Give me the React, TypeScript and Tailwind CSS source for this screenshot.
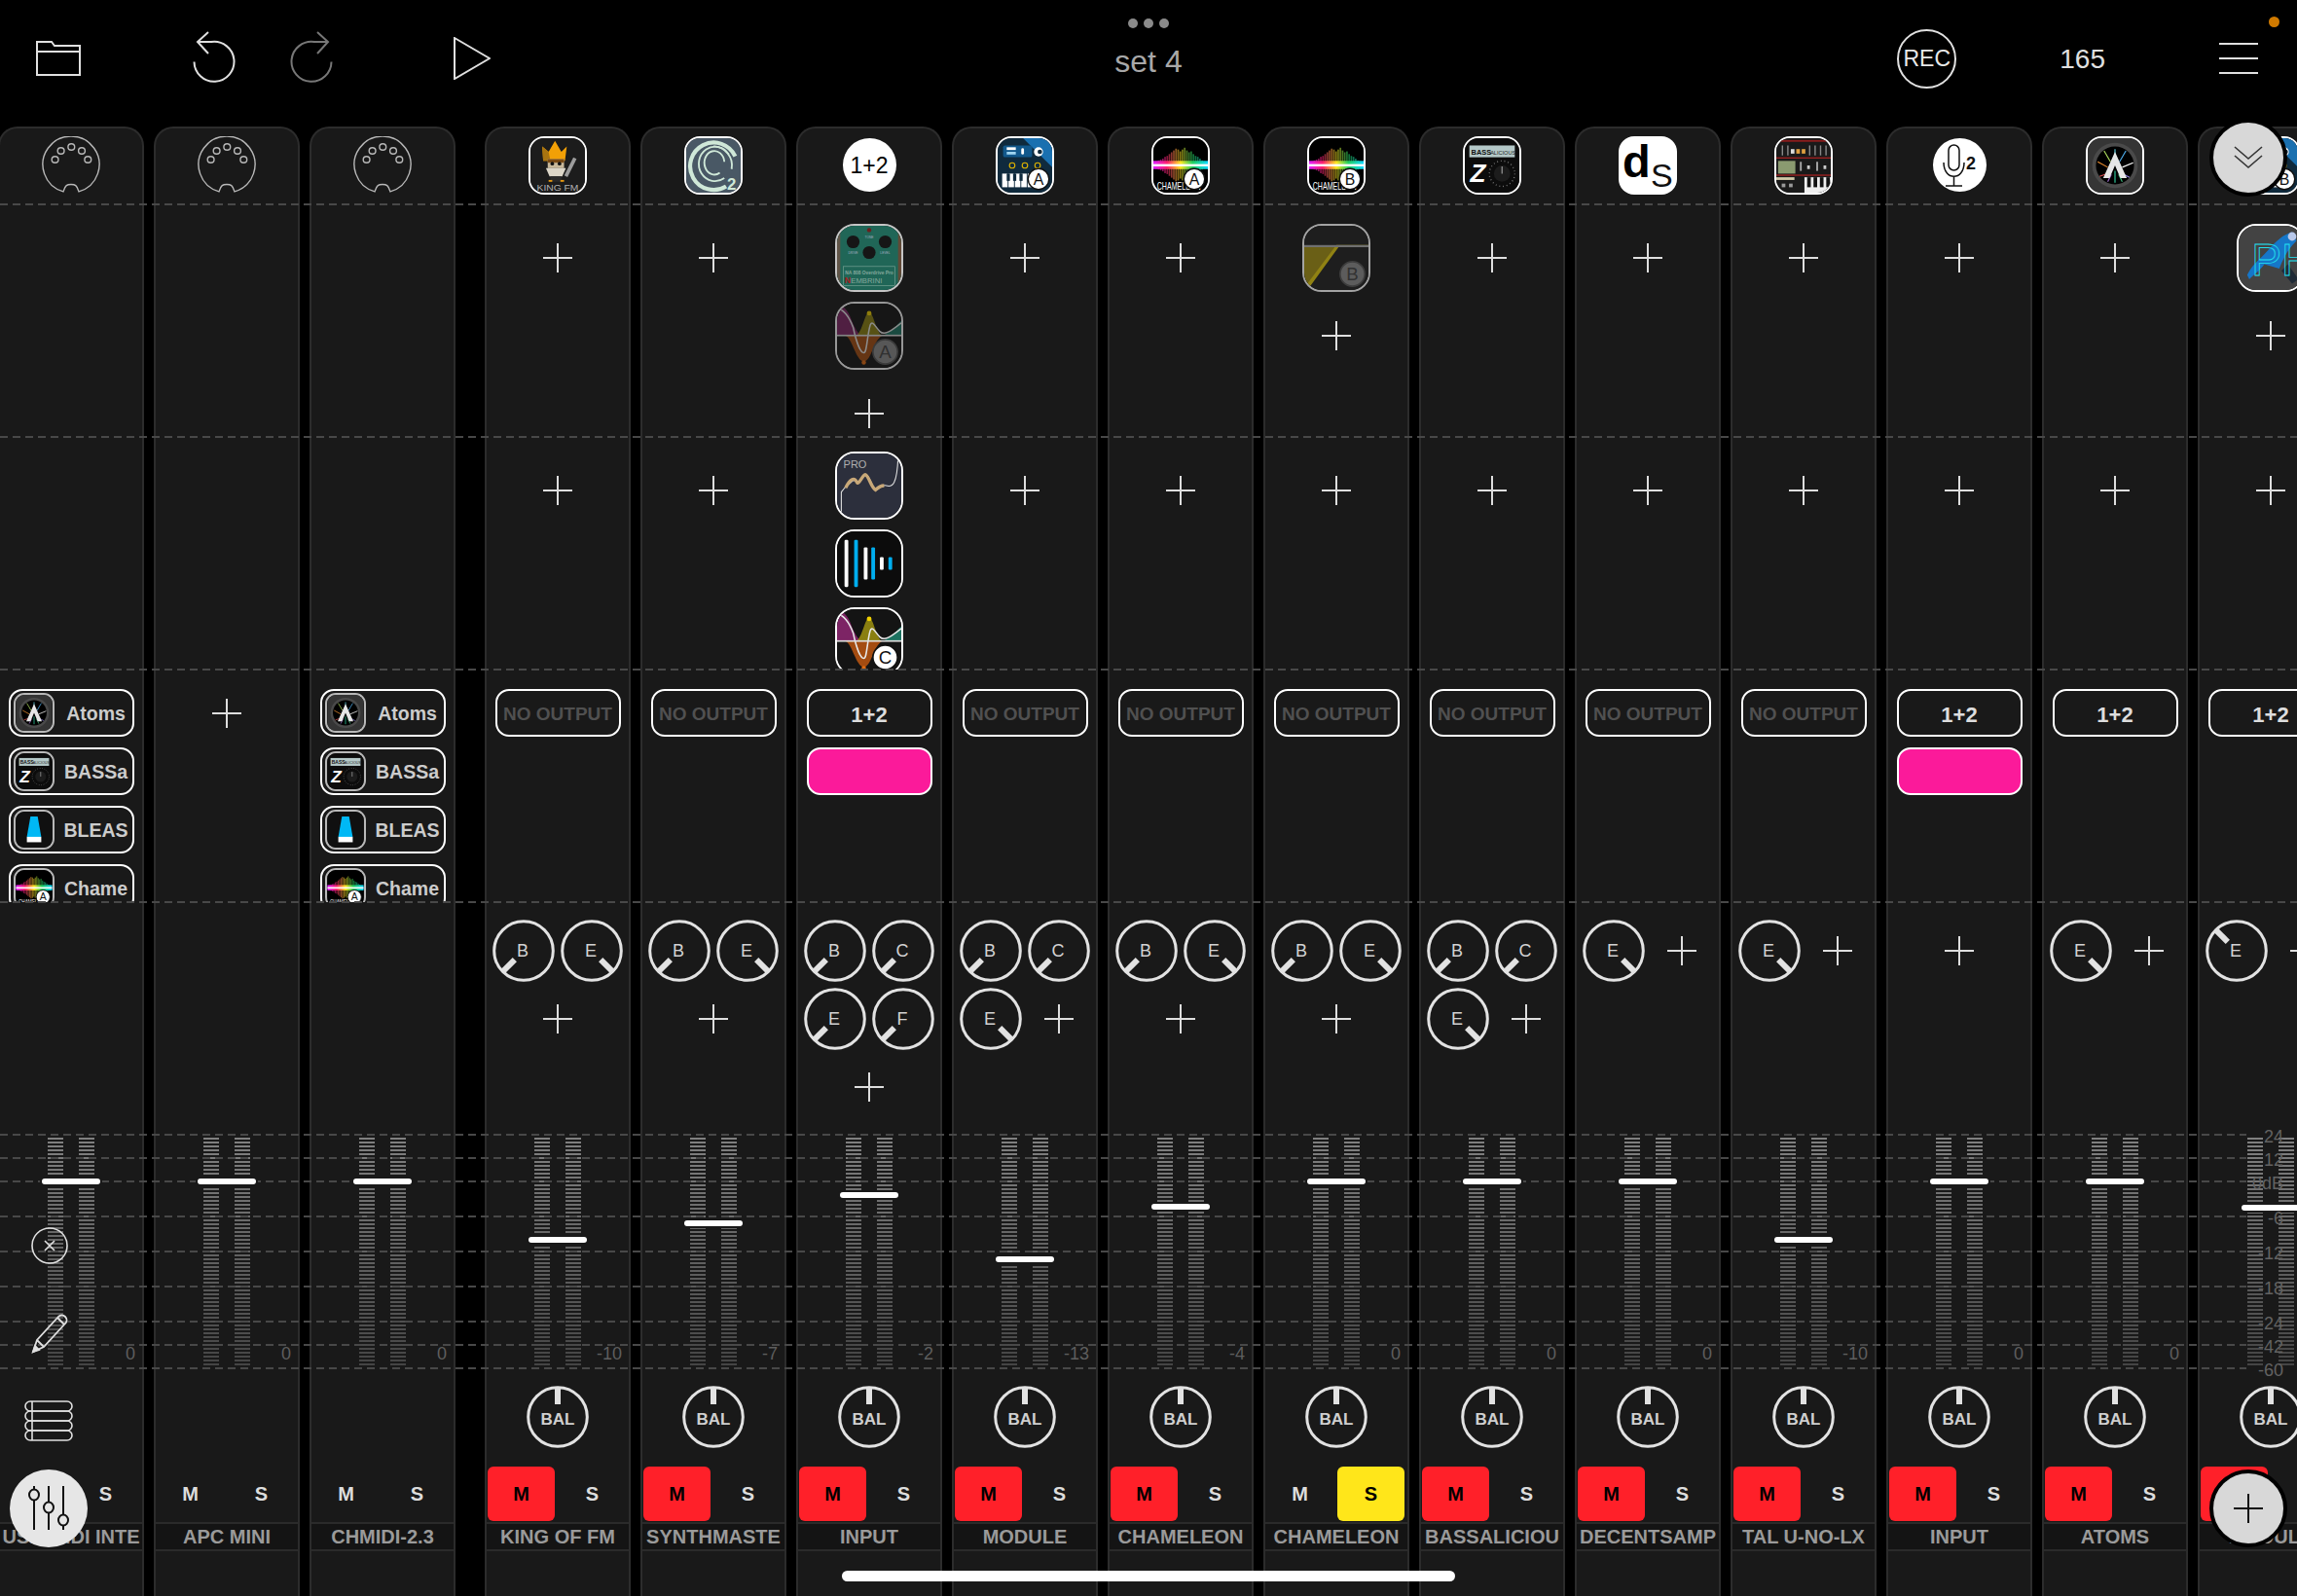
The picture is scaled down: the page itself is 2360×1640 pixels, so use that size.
import type { ReactNode } from "react";

type Knob = [string, number];
type Insert = { art: string; dim?: string };
type Channel = {
  name: string;
  head: string;
  inserts: Insert[];
  sends: Insert[];
  output?: string;
  pink?: boolean;
  routes?: [string, string][];
  knobs: Knob[];
  fader: number;
  value?: string;
  muted?: boolean;
  soloed?: boolean;
  midi?: boolean;
  scale?: boolean;
};

const BL = -135;
const BR = 135;

const channels: Channel[] = [
  {
    name: "USB MIDI INTE", head: "midi", inserts: [], sends: [], midi: true, knobs: [], fader: 1214, value: "0",
    routes: [["atoms", "Atoms"], ["bassa", "BASSa"], ["bleass", "BLEAS"], ["chamA", "Chame"]],
  },
  { name: "APC MINI", head: "midi", inserts: [], sends: [], midi: true, knobs: [], fader: 1214, value: "0", routes: [] },
  {
    name: "CHMIDI-2.3", head: "midi", inserts: [], sends: [], midi: true, knobs: [], fader: 1214, value: "0",
    routes: [["atoms", "Atoms"], ["bassa", "BASSa"], ["bleass", "BLEAS"], ["chamA", "Chame"]],
  },
  { name: "KING OF FM", head: "king", inserts: [], sends: [], knobs: [["B", BL], ["E", BR]], fader: 1274, value: "-10", muted: true },
  { name: "SYNTHMASTE", head: "synth", inserts: [], sends: [], knobs: [["B", BL], ["E", BR]], fader: 1257, value: "-7", muted: true },
  {
    name: "INPUT", head: "in12",
    inserts: [{ art: "pedal", dim: "opacity-75" }, { art: "eqA", dim: "opacity-55" }],
    sends: [{ art: "pro" }, { art: "bars" }, { art: "eqC" }],
    output: "1+2", pink: true,
    knobs: [["B", BL], ["C", BL], ["E", BL], ["F", BL]], fader: 1228, value: "-2", muted: true,
  },
  { name: "MODULE", head: "moduleA", inserts: [], sends: [], knobs: [["B", BL], ["C", BL], ["E", BR]], fader: 1294, value: "-13", muted: true },
  { name: "CHAMELEON", head: "chamA", inserts: [], sends: [], knobs: [["B", BL], ["E", BR]], fader: 1240, value: "-4", muted: true },
  { name: "CHAMELEON", head: "chamB", inserts: [{ art: "comp", dim: "opacity-60" }], sends: [], knobs: [["B", BL], ["E", BR]], fader: 1214, value: "0", soloed: true },
  { name: "BASSALICIOU", head: "bassa", inserts: [], sends: [], knobs: [["B", BL], ["C", BL], ["E", BR]], fader: 1214, value: "0", muted: true },
  { name: "DECENTSAMP", head: "ds", inserts: [], sends: [], knobs: [["E", BR]], fader: 1214, value: "0", muted: true },
  { name: "TAL U-NO-LX", head: "tal", inserts: [], sends: [], knobs: [["E", BR]], fader: 1274, value: "-10", muted: true },
  { name: "INPUT", head: "mic2", inserts: [], sends: [], output: "1+2", pink: true, knobs: [], fader: 1214, value: "0", muted: true },
  { name: "ATOMS", head: "atoms", inserts: [], sends: [], output: "1+2", knobs: [["E", BR]], fader: 1214, value: "0", muted: true },
  { name: "MODULE", head: "moduleB", inserts: [{ art: "ph" }], sends: [], output: "1+2", knobs: [["E", -45]], fader: 1241, muted: true, scale: true },
];

const gridLines = [210, 449, 688, 927];
const faderLines = [1166, 1190, 1214, 1250, 1286, 1322, 1358, 1382, 1406];
const scaleLabels: [string, number][] = [
  ["24", 1168], ["12", 1192], ["0dB", 1216], ["-6", 1252], ["-12", 1288], ["-18", 1324], ["-24", 1360], ["-42", 1384], ["-60", 1408],
];

function Badge({ letter, dim }: { letter: string; dim?: boolean }) {
  return (
    <g>
      <circle cx="45" cy="45" r="11.5" fill={dim ? "#8a8a8a" : "#fff"} stroke={dim ? "#555" : "#111"} strokeWidth="1.5" />
      <text x="45" y="51" textAnchor="middle" fontSize="17" fill={dim ? "#444" : "#111"}>{letter}</text>
    </g>
  );
}

function Chameleon({ letter }: { letter: string }) {
  const heights = [3, 4, 5, 6, 7, 9, 10, 12, 14, 16, 18, 17, 15, 17, 19, 16, 14, 15, 12, 10, 9, 7, 5, 4, 3];
  return (
    <>
      <defs>
        <linearGradient id="chroma" gradientUnits="userSpaceOnUse" x1="0" x2="60" y1="0" y2="0">
          <stop offset="0" stopColor="#e020ff" />
          <stop offset="0.25" stopColor="#ff2070" />
          <stop offset="0.5" stopColor="#ffe820" />
          <stop offset="0.72" stopColor="#20d060" />
          <stop offset="1" stopColor="#10d8ff" />
        </linearGradient>
      </defs>
      <rect width="60" height="60" fill="#000" />
      <g fill="url(#chroma)">
        <rect x="0" y="25" width="60" height="9" />
        {heights.map((h, i) => (
          <rect key={i} x={i * 2.4} y={29.5 - h} width="1.8" height={h * 2} opacity="0.55" />
        ))}
      </g>
      <rect x="0" y="28.5" width="60" height="2.5" fill="#fff" />
      <text x="4" y="57" fontSize="12" fill="#fff" textLength="48" lengthAdjust="spacingAndGlyphs">CHAMELEON</text>
      <Badge letter={letter} />
    </>
  );
}

function ModuleArt({ letter }: { letter: string }) {
  return (
    <>
      <rect width="60" height="60" fill="#0f2a3d" />
      <polygon points="28,0 60,0 60,32" fill="#1a70b0" />
      <rect x="6" y="8" width="32" height="13" rx="2" fill="#11588c" />
      <rect x="10" y="10" width="10" height="3" fill="#fff" />
      <rect x="10" y="15" width="10" height="3" fill="#9fd4f0" />
      <rect x="26" y="11" width="3" height="7" rx="1.5" fill="#fff" />
      <circle cx="45" cy="15" r="5" fill="#fff" />
      <circle cx="46.5" cy="15" r="2.5" fill="#0f2a3d" />
      {[16, 30, 44].map((x) => (
        <circle key={x} cx={x} cy="30" r="3" fill="none" stroke="#e0b400" strokeWidth="1.2" />
      ))}
      {[5, 12, 19, 26, 33].map((x) => (
        <rect key={x} x={x} y="39" width="6" height="15" fill="#fff" />
      ))}
      {[10, 17, 24].map((x) => (
        <rect key={x} x={x} y="39" width="3.5" height="8" fill="#0f2a3d" />
      ))}
      <Badge letter={letter} />
    </>
  );
}

function EqArt({ letter, dim }: { letter: string; dim?: boolean }) {
  return (
    <>
      <rect width="60" height="60" fill="#141414" />
      <path d="M0 0 C6 2 10 6 13 14 C16 22 19 28 24 30 L0 30Z" fill="#a02a80" opacity="0.75" />
      <path d="M18 30 C24 26 26 8 30 8 C34 8 36 26 42 30Z" fill="#a89a10" opacity="0.8" />
      <path d="M42 30 C48 28 54 22 60 16 L60 30Z" fill="#1f9a80" opacity="0.7" />
      <path d="M8 30 C14 32 18 54 25 54 C32 54 34 34 42 30Z" fill="#c85a10" opacity="0.8" />
      <path d="M0 4 C8 6 12 14 15 22 C18 36 22 46 25 46 C28 46 28 30 31 20 C33 15 36 22 40 26 C44 30 50 26 60 18" fill="none" stroke="#e8e8e8" strokeWidth="1.4" />
      <rect x="0" y="29" width="60" height="1.5" fill="#ddd" />
      <circle cx="30" cy="9" r="2.2" fill="#f0d000" />
      <circle cx="25" cy="55" r="2" fill="#e06a10" />
      <Badge letter={letter} dim={dim} />
    </>
  );
}

function Art({ name }: { name: string }) {
  switch (name) {
    case "king":
      return (
        <>
          <rect width="60" height="60" fill="#1c1c1c" />
          <polygon points="14,25 13,9 20,15 27,3 34,15 40,9 38,25" fill="#f2a006" />
          <polygon points="14,25 13,9 20,15 22,25" fill="#a87410" />
          <rect x="19" y="23" width="18" height="10" fill="#c8b89a" />
          <rect x="19" y="23" width="18" height="4" fill="#7a4a14" />
          <circle cx="24" cy="28" r="2" fill="#111" />
          <circle cx="32" cy="28" r="2" fill="#111" />
          <path d="M17 33 H39 L35 42 H21Z" fill="#dcd6c8" />
          <rect x="22" y="42" width="12" height="6" fill="#2a2a2a" />
          <rect x="20" y="46" width="4" height="2" fill="#e89a10" />
          <rect x="33" y="46" width="4" height="2" fill="#e89a10" />
          <path d="M49 22 L39 42" stroke="#9c9c9c" strokeWidth="4" />
          <text x="30" y="58" textAnchor="middle" fontSize="10.5" fill="#b0b0b0" textLength="46" lengthAdjust="spacingAndGlyphs">KING FM</text>
        </>
      );
    case "synth":
      return (
        <>
          <rect width="60" height="60" fill="#495865" />
          <g fill="none" stroke="#cfe8d8">
            <path d="M44 53 A26 26 0 1 1 54 20" strokeWidth="4.5" />
            <path d="M42 44 A18 19 0 1 1 47 18" strokeWidth="2" />
            <path d="M37 38 A11 13 0 1 1 42 26" strokeWidth="2" />
            <path d="M30 9 A21 21 0 0 1 50 34" strokeWidth="2" />
          </g>
          <text x="50" y="57" textAnchor="middle" fontSize="18" fontWeight="700" fill="#cfe8d8">2</text>
        </>
      );
    case "moduleA":
      return <ModuleArt letter="A" />;
    case "moduleB":
      return <ModuleArt letter="B" />;
    case "chamA":
      return <Chameleon letter="A" />;
    case "chamB":
      return <Chameleon letter="B" />;
    case "bassa":
      return (
        <>
          <rect width="60" height="60" fill="#0c0c0c" />
          <rect x="5" y="8" width="50" height="13" fill="#b4c8c8" />
          <text x="7" y="18" fontSize="8" fontWeight="700" fill="#111">BASS</text>
          <text x="28" y="18" fontSize="6" fill="#222">ALICIOUS</text>
          <text x="6" y="48" fontSize="28" fontWeight="700" fontStyle="italic" fill="#fff">Z</text>
          <circle cx="41" cy="39" r="9" fill="#1c1c1c" />
          <circle cx="41" cy="39" r="14" fill="none" stroke="#777" strokeWidth="1.5" strokeDasharray="1 3" />
          <path d="M41 39 V31" stroke="#888" strokeWidth="1.5" />
        </>
      );
    case "ds":
      return (
        <>
          <rect width="60" height="60" fill="#fff" />
          <text x="4" y="42" fontSize="47" fontWeight="700" fill="#000">d</text>
          <text x="33" y="52" fontSize="34" fill="#111">S</text>
        </>
      );
    case "tal":
      return (
        <>
          <rect width="60" height="60" fill="#1a1a1a" />
          <rect x="0" y="2" width="60" height="2" fill="#8a1c1c" />
          <rect x="16" y="12" width="4" height="5" fill="#ddd" />
          <rect x="22" y="12" width="4" height="5" fill="#e0a040" />
          <rect x="28" y="12" width="4" height="5" fill="#e0a040" />
          {[6, 12, 36, 42, 48, 54].map((x) => (
            <rect key={x} x={x} y="8" width="1.5" height="11" fill="#888" />
          ))}
          <rect x="0" y="21" width="60" height="1.5" fill="#9a2020" />
          <rect x="2" y="25" width="19" height="14" fill="#8a9a70" />
          <rect x="26" y="26" width="2" height="10" fill="#aaa" />
          <rect x="34" y="30" width="3" height="4" fill="#ccc" />
          <rect x="44" y="26" width="2" height="10" fill="#aaa" />
          <rect x="52" y="30" width="3" height="4" fill="#ccc" />
          <rect x="0" y="40" width="60" height="1.5" fill="#9a2020" />
          <rect x="0" y="43" width="20" height="3" fill="#cfc8a8" />
          {[6, 14].map((x) => (
            <rect key={x} x={x} y="50" width="4" height="4" fill="#999" />
          ))}
          <rect x="31" y="43" width="29" height="17" fill="#eee" />
          {[34, 41, 48, 55].map((x) => (
            <rect key={x} x={x} y="43" width="4" height="11" fill="#111" />
          ))}
        </>
      );
    case "mic2":
      return (
        <g fill="none" stroke="#111">
          <rect x="16" y="7" width="11" height="26" rx="5.5" strokeWidth="1.5" />
          <path d="M11 25 C11 44 32 44 32 25 M21.5 39 V49 M13 49 H30" strokeWidth="1.5" />
          <text x="39" y="32" textAnchor="middle" fontSize="18" fontWeight="700" fill="#111" stroke="none">2</text>
        </g>
      );
    case "atoms":
      return (
        <>
          <rect width="60" height="60" fill="#353535" />
          <circle cx="30" cy="30" r="25" fill="#4a4a4a" />
          <circle cx="30" cy="30" r="21" fill="#000" />
          <g strokeWidth="1.2">
            <path d="M30 24 V12" stroke="#60d0e0" />
            <path d="M25 26 L18 14" stroke="#b0e060" />
            <path d="M35 26 L42 14" stroke="#50b0f0" />
            <path d="M22 32 L11 26" stroke="#f09030" />
            <path d="M38 32 L50 27" stroke="#fff" />
            <path d="M24 38 L13 42" stroke="#e05050" />
            <path d="M36 38 L46 43" stroke="#9080e0" />
            <path d="M26 40 L22 48" stroke="#a070d0" />
            <path d="M34 40 L38 48" stroke="#40c080" />
            <path d="M30 36 V49" stroke="#30d0a0" />
          </g>
          <polygon points="30,15 43,44 36,44 30,30 24,44 17,44" fill="#e6e6e6" />
        </>
      );
    case "bleass":
      return (
        <>
          <rect width="60" height="60" fill="#101010" />
          <polygon points="24,8 36,8 42,42 18,42" fill="#00b8f5" />
          <rect x="18" y="42" width="24" height="9" fill="#fff" />
        </>
      );
    case "pedal":
      return (
        <>
          <rect width="60" height="60" fill="#23806c" />
          <rect x="0" y="0" width="3" height="60" fill="#7a6a58" />
          <rect x="57" y="0" width="3" height="60" fill="#7a5a40" />
          <circle cx="30" cy="4" r="2" fill="#8a2020" />
          {[[15, 15], [45, 15], [30, 25]].map(([x, y]) => (
            <circle key={x} cx={x} cy={y} r="6" fill="#151515" />
          ))}
          <text x="30" y="12" textAnchor="middle" fontSize="3" fill="#cde">TONE</text>
          <text x="15" y="26" textAnchor="middle" fontSize="3" fill="#cde">DRIVE</text>
          <text x="45" y="26" textAnchor="middle" fontSize="3" fill="#cde">LEVEL</text>
          <rect x="6" y="38" width="48" height="18" fill="none" stroke="#9ad0c0" strokeWidth="0.6" />
          <text x="30" y="45" textAnchor="middle" fontSize="4.4" fontWeight="700" fill="#a8d8c8">NA 808 Overdrive Pro</text>
          <text x="7" y="54" fontSize="8" fontWeight="700" fill="#d02020">N</text>
          <text x="13" y="54" fontSize="7" fill="#a8d8c8">EMBRINI</text>
        </>
      );
    case "eqA":
      return <EqArt letter="A" dim />;
    case "eqC":
      return <EqArt letter="C" />;
    case "comp":
      return (
        <>
          <rect width="60" height="60" fill="#222" />
          <path d="M0 20 H30 L0 60Z" fill="#a08f15" />
          <path d="M0 58 L30 18 H60 V20 H32 L3 60 H0Z" fill="#e0c810" />
          <rect x="0" y="18" width="60" height="2" fill="#aaa" />
          <Badge letter="B" dim />
        </>
      );
    case "pro":
      return (
        <>
          <rect width="60" height="60" fill="#2c2f3c" />
          <text x="6" y="14" fontSize="10" fill="#b0b0b0">PRO</text>
          <path d="M4 60 V36 C8 30 10 30 14 26 C17 22 20 32 24 22 C27 16 30 22 34 32 C38 38 40 28 46 30 C52 32 56 28 57 4" fill="none" stroke="#ddd" strokeWidth="1" />
          <path d="M8 32 C12 24 16 22 18 26 C20 32 24 18 27 20 C30 22 32 32 36 34 C38 32 40 30 44 30" fill="none" stroke="#c8a878" strokeWidth="3" />
        </>
      );
    case "bars":
      return (
        <>
          <rect width="60" height="60" fill="#0c0c0c" />
          <rect x="7" y="8" width="3.5" height="44" rx="1" fill="#fff" />
          <rect x="16" y="8" width="3.5" height="44" rx="1" fill="#00aeef" />
          <rect x="25" y="15" width="3.5" height="30" rx="1" fill="#fff" />
          <rect x="32" y="15" width="3.5" height="30" rx="1" fill="#00aeef" />
          <rect x="40" y="24" width="3.5" height="12" rx="1" fill="#fff" />
          <rect x="48" y="24" width="3.5" height="12" rx="1" fill="#00aeef" />
        </>
      );
    case "ph":
      return (
        <>
          <rect width="60" height="60" fill="#434343" />
          <path d="M8 46 C14 34 22 30 30 20 C36 14 42 8 50 6 L54 14 C46 22 42 30 38 40 L24 36 C20 42 14 46 10 50Z" fill="#1676c8" />
          <path d="M46 36 L56 50 L50 54 L40 42Z" fill="#1f2a36" />
          <circle cx="50" cy="10" r="4" fill="#b8c8ea" />
          <text x="12" y="46" fontSize="42" fill="none" stroke="#22e0f0" strokeWidth="0.8">PH</text>
        </>
      );
    default:
      return null;
  }
}

function PluginIcon({ art, className }: { art: string; className: string }) {
  return (
    <div className={`box-border shrink-0 overflow-hidden ${className}`}>
      <svg viewBox="0 0 60 60" className="block h-full w-full">
        <Art name={art} />
      </svg>
    </div>
  );
}

function Plus({ color = "#dedede" }: { color?: string }) {
  return (
    <svg width="30" height="30" viewBox="0 0 30 30">
      <path d="M0 15 H30 M15 0 V30" stroke={color} strokeWidth="2" />
    </svg>
  );
}

function MidiIcon() {
  return (
    <svg width="60" height="60" viewBox="0 0 60 60" fill="none" stroke="#b8b8b8" strokeWidth="1.4">
      <path d="M22 56.9 A29 29 0 1 1 38 56.9 C36 50 34 49.5 30 49.5 C26 49.5 24 50 22 56.9 Z" />
      <ellipse cx="30.3" cy="11" rx="3.4" ry="3.2" />
      <ellipse cx="19.6" cy="15" rx="3.4" ry="3.2" />
      <ellipse cx="41" cy="15" rx="3.4" ry="3.2" />
      <ellipse cx="13.6" cy="24" rx="3.4" ry="3.2" />
      <ellipse cx="47.3" cy="24" rx="3.4" ry="3.2" />
    </svg>
  );
}

function Dial({ angle, label, big }: { angle: number; label: string; big?: boolean }) {
  return (
    <div className="relative flex h-[64px] w-[64px] items-center justify-center">
      <svg width="64" height="64" viewBox="0 0 64 64" className="absolute inset-0" fill="none" stroke="#e2e2e2">
        <circle cx="32" cy="32" r="30.3" strokeWidth="3" />
        <line x1="32" y1="2" x2="32" y2="19" strokeWidth="6" transform={`rotate(${angle} 32 32)`} />
      </svg>
      <span className={big ? "mt-[6px] text-[17px] font-bold text-[#cfcfcf]" : "mr-[2px] text-[18px] text-[#d2d2d2]"}>{label}</span>
    </div>
  );
}

function InsertStack({ items, pad }: { items: Insert[]; pad: string }) {
  return (
    <div className={`flex h-[239px] flex-col items-center overflow-hidden ${pad}`}>
      {items.map((it, i) => (
        <div key={i} className="flex h-[80px] shrink-0 items-center justify-center">
          <PluginIcon art={it.art} className={`h-[70px] w-[70px] rounded-[20px] border-[2.5px] border-white ${it.dim ?? ""}`} />
        </div>
      ))}
      <div className="flex h-[80px] shrink-0 items-center justify-center">
        <Plus />
      </div>
    </div>
  );
}

function Output({ ch }: { ch: Channel }) {
  const pill = "flex h-[49px] w-[129px] shrink-0 items-center rounded-[14px] border-2 border-white";
  if (ch.routes) {
    return (
      <div className="flex h-[239px] flex-col items-center gap-[11px] overflow-hidden pt-[20px]">
        {ch.routes.map(([art, label]) => (
          <div key={art} className={`${pill} pl-[3px]`}>
            <PluginIcon art={art} className="h-[41px] w-[42px] rounded-[11px] border-2 border-[#b8b8b8]" />
            <span className="ml-[6px] flex-1 whitespace-nowrap pt-[2px] text-center text-[19.5px] font-bold text-[#cccccc]">{label}</span>
          </div>
        ))}
        {ch.routes.length === 0 && (
          <div className="flex h-[49px] items-center">
            <Plus />
          </div>
        )}
      </div>
    );
  }
  return (
    <div className="flex h-[239px] flex-col items-center gap-[11px] overflow-hidden pt-[20px]">
      <div className={`${pill} justify-center pt-[3px]`}>
        {ch.output ? (
          <span className="text-[22px] font-bold text-[#dddddd]">{ch.output}</span>
        ) : (
          <span className="whitespace-nowrap text-[19px] font-bold text-[#505050]">NO OUTPUT</span>
        )}
      </div>
      {ch.pink && <div className={`${pill} bg-[#fb1a9a]`} />}
    </div>
  );
}

function Fader({ ch }: { ch: Channel }) {
  const meter =
    "h-[234px] w-[16px] bg-[image:repeating-linear-gradient(to_bottom,transparent_0,transparent_2px,#191919_2px,#191919_4px),linear-gradient(to_bottom,#808080,#444444)]";
  return (
    <div className="relative flex h-[240px] justify-center gap-[16px] pt-[3px]">
      <div className={meter} />
      <div className={meter} />
      <div
        className="absolute left-1/2 z-10 h-[6px] w-[60px] -translate-x-1/2 rounded-full bg-white shadow-[0_0_0_2px_#191919]"
        style={{ top: ch.fader - 3 - 1166 }}
      />
      {ch.value && (
        <span className="absolute right-[7px] top-[214px] text-[18px] leading-[22px] text-[#5e5e5e]">{ch.value}</span>
      )}
      {ch.scale &&
        scaleLabels.map(([label, y]) => (
          <span
            key={label}
            className="absolute right-[60px] z-20 text-[18px] leading-[20px] text-[#626262]"
            style={{ top: y - 10 - 1166 }}
          >
            {label}
          </span>
        ))}
    </div>
  );
}

function Strip({ ch }: { ch: Channel }) {
  return (
    <div className="flex h-[1510px] w-[150px] shrink-0 flex-col rounded-t-[20px] border-x-2 border-t-2 border-[#2c2c2c] bg-[#191919]">
      <div className="flex h-[78px] justify-center pt-[8px]">
        {ch.head === "midi" ? (
          <MidiIcon />
        ) : ch.head === "in12" ? (
          <div className="mt-[2px] flex h-[55px] w-[55px] items-center justify-center rounded-full bg-white pt-[2px] text-[23px] text-black">1+2</div>
        ) : ch.head === "mic2" ? (
          <div className="mt-[2px] h-[55px] w-[55px] rounded-full bg-white">
            <svg viewBox="0 0 55 55" className="block h-full w-full">
              <Art name="mic2" />
            </svg>
          </div>
        ) : (
          <PluginIcon art={ch.head} className={`h-[60px] w-[60px] rounded-[16px] ${ch.head === "ds" ? "" : "border-2 border-white"}`} />
        )}
      </div>
      {ch.midi ? <div className="h-[239px]" /> : <InsertStack items={ch.inserts} pad="pt-[15px]" />}
      {ch.midi ? <div className="h-[239px]" /> : <InsertStack items={ch.sends} pad={ch.sends.length ? "pt-[10px]" : "pt-[15px]"} />}
      <Output ch={ch} />
      <div className="flex h-[239px] justify-center pt-[15px]">
        {!ch.midi && (
          <div className="flex w-[140px] flex-wrap content-start justify-center">
            {ch.knobs.map(([l, a]) => (
              <div key={l} className="flex h-[70px] w-[70px] items-center justify-center">
                <Dial angle={a} label={l} />
              </div>
            ))}
            <div className={`flex h-[70px] items-center justify-center ${ch.knobs.length % 2 ? "w-[70px]" : "w-[140px]"}`}>
              <Plus />
            </div>
          </div>
        )}
      </div>
      <Fader ch={ch} />
      <div className="flex h-[101px] justify-center pt-[18px]">
        {!ch.midi && <Dial angle={0} label="BAL" big />}
      </div>
      <div className="grid h-[56px] grid-cols-2 pl-[1px] pr-[3px]">
        <div className={`flex h-[56px] w-[69px] items-center justify-center rounded-[6px] text-[20px] font-bold ${ch.muted ? "bg-[#ff2029] text-black" : "text-[#dddddd]"}`}>M</div>
        <div className={`ml-auto flex h-[56px] w-[69px] items-center justify-center rounded-[6px] text-[20px] font-bold ${ch.soloed ? "bg-[#ffe61a] text-black" : "text-[#dddddd]"}`}>S</div>
      </div>
      <div className="mt-[1px] h-[30px] whitespace-nowrap border-y-2 border-[#2a2a2a] bg-[#141414] text-center text-[20px] font-bold leading-[27px] text-[#9a9a9a]">
        {ch.name}
      </div>
    </div>
  );
}

function TopBar() {
  return (
    <div className="grid h-[130px] grid-cols-[1fr_auto_1fr] pb-[10px]">
      <div className="flex items-center pl-[36px]">
        <svg width="48" height="38" viewBox="0 0 48 38" fill="none" stroke="#e0e0e0" strokeWidth="2">
          <path d="M2 36 V2 H17 L20 6 H46 V36 Z M2 12 H46" />
        </svg>
        <svg width="44" height="54" viewBox="0 0 44 54" fill="none" stroke="#e0e0e0" strokeWidth="2" className="ml-[114px] mt-[-2px]">
          <path d="M16 1 L5 11 L16 23 M5 11 H19 A20.5 20.5 0 1 1 1.5 31.5" />
        </svg>
        <svg width="44" height="54" viewBox="0 0 44 54" fill="none" stroke="#777777" strokeWidth="2" className="ml-[56px] mt-[-2px] -scale-x-100">
          <path d="M16 1 L5 11 L16 23 M5 11 H19 A20.5 20.5 0 1 1 1.5 31.5" />
        </svg>
        <svg width="38" height="44" viewBox="0 0 38 44" fill="none" stroke="#e0e0e0" strokeWidth="2" className="ml-[124px]">
          <path d="M1 1 L37 22 L1 43 Z" />
        </svg>
      </div>
      <div className="flex flex-col items-center pt-[19px]">
        <div className="flex gap-[6px]">
          <div className="h-[10px] w-[10px] rounded-full bg-[#8a8a8a]" />
          <div className="h-[10px] w-[10px] rounded-full bg-[#8a8a8a]" />
          <div className="h-[10px] w-[10px] rounded-full bg-[#8a8a8a]" />
        </div>
        <div className="mt-[9px] text-[32px] leading-[50px] text-[#a8a8a8]">set 4</div>
      </div>
      <div className="flex items-center justify-end pr-[40px]">
        <div className="flex h-[61px] w-[61px] items-center justify-center rounded-full border-2 border-[#e0e0e0] text-[23px] text-[#e8e8e8]">REC</div>
        <div className="ml-[106px] mt-[2px] text-[28px] text-[#e0e0e0]">165</div>
        <div className="ml-[117px] flex h-[32px] w-[40px] flex-col justify-between">
          <div className="h-[2px] bg-[#e0e0e0]" />
          <div className="h-[2px] bg-[#e0e0e0]" />
          <div className="h-[2px] bg-[#e0e0e0]" />
        </div>
      </div>
    </div>
  );
}

function Overlay({ className, children }: { className: string; children: ReactNode }) {
  return <div className={`absolute z-30 ${className}`}>{children}</div>;
}

export default function App() {
  const dash =
    "absolute left-0 z-[5] h-[2px] bg-[image:repeating-linear-gradient(to_right,#484848_0,#484848_8px,transparent_8px,transparent_13px)]";
  return (
    <div className="relative h-[1640px] w-[2360px] overflow-hidden bg-black font-['Liberation_Sans',Arial,sans-serif]">
      <TopBar />
      <div className="ml-[-2px] flex gap-[10px]">
        {channels.map((ch, i) => (
          <div key={i} className={`shrink-0 ${i === 2 ? "mr-[20px]" : ""}`}>
            <Strip ch={ch} />
          </div>
        ))}
      </div>

      {gridLines.map((y) => (
        <div key={y} className={`${dash} w-full`} style={{ top: y - 1 }} />
      ))}
      {faderLines.map((y) => (
        <div key={y} className={`${dash} w-[2308px]`} style={{ top: y - 1 }} />
      ))}

      <Overlay className="left-[2331px] top-[17px] h-[11px] w-[11px] rounded-full bg-[#d07a00]">{null}</Overlay>

      <Overlay className="left-[32px] top-[1261px]">
        <svg width="38" height="38" viewBox="0 0 38 38" fill="none" stroke="#e0e0e0" strokeWidth="1.6">
          <circle cx="19" cy="19" r="18" />
          <path d="M14 14 L24 24 M24 14 L14 24" />
        </svg>
      </Overlay>
      <Overlay className="left-[32px] top-[1350px]">
        <svg width="38" height="41" viewBox="0 0 38 41" fill="none" stroke="#e0e0e0" strokeWidth="1.8">
          <path d="M2 39 L6 27 L28 3 C30 1 33 1 35 3 C37 5 37 8 35 10 L13 34 Z M6 27 L13 34 M27 4 L34 11" />
          <path d="M2 39 L4 33 L8 37 Z" fill="#e0e0e0" />
        </svg>
      </Overlay>
      <Overlay className="left-[25px] top-[1439px]">
        <svg width="50" height="42" viewBox="0 0 50 42" fill="none" stroke="#e0e0e0" strokeWidth="1.6">
          <rect x="1" y="1" width="48" height="10" rx="5" />
          <rect x="1" y="11" width="48" height="10" rx="5" />
          <rect x="1" y="21" width="48" height="10" rx="5" />
          <rect x="1" y="31" width="48" height="10" rx="5" />
          <path d="M8 1 V41" />
        </svg>
      </Overlay>
      <Overlay className="left-[10px] top-[1510px] h-[80px] w-[80px] rounded-full bg-[#e6e6e6]">
        <svg width="80" height="80" viewBox="0 0 80 80" fill="#e6e6e6" stroke="#111" strokeWidth="2">
          <path d="M25 17 V62 M40 17 V62 M55 17 V62" />
          <ellipse cx="25" cy="26" rx="5" ry="5.5" />
          <ellipse cx="40" cy="39" rx="5" ry="5.5" />
          <ellipse cx="55" cy="52" rx="5" ry="5.5" />
        </svg>
      </Overlay>

      <Overlay className="left-[2270px] top-[122px] flex h-[80px] w-[80px] items-center justify-center rounded-full border-4 border-black bg-[#d8d8d8]">
        <svg width="30" height="24" viewBox="0 0 30 24" fill="none" stroke="#333" strokeWidth="1.6">
          <path d="M1 1 L15 13 L29 1 M1 10 L15 22 L29 10" />
        </svg>
      </Overlay>
      <Overlay className="left-[2270px] top-[1510px] flex h-[80px] w-[80px] items-center justify-center rounded-full border-4 border-black bg-[#d8d8d8]">
        <Plus color="#111" />
      </Overlay>

      <Overlay className="left-[865px] top-[1614px] h-[11px] w-[630px] rounded-full bg-white">{null}</Overlay>
    </div>
  );
}
